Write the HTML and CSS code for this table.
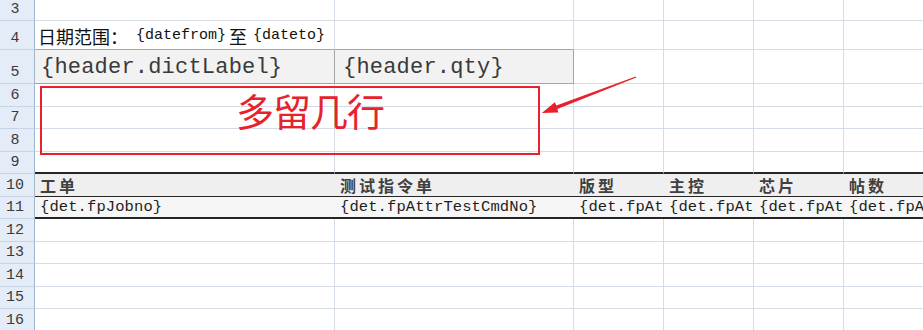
FILE: index.html
```html
<!DOCTYPE html>
<html lang="zh-CN">
<head>
<meta charset="utf-8">
<title>Sheet</title>
<link rel="stylesheet" href="styles.css">
</head>
<body>
<div class="sheet">
  <div class="row h21"><div class="rh">3</div><div class="c ca"></div><div class="c cb"></div><div class="c cc"></div><div class="c cd"></div><div class="c ce"></div><div class="c cf"></div></div>
  <div class="row h29"><div class="rh">4</div><div class="c ca gb date"><span class="zh">日期范围：</span><span class="en en1">{datefrom}</span><span class="zh zh2">至</span><span class="en">{dateto}</span></div><div class="c cb gb"></div><div class="c cc"></div><div class="c cd"></div><div class="c ce"></div><div class="c cf"></div></div>
  <div class="row h34"><div class="rh">5</div><div class="c ca fill big">{header.dictLabel}</div><div class="c cb fill big qty">{header.qty}</div><div class="c cc"></div><div class="c cd"></div><div class="c ce"></div><div class="c cf"></div></div>
  <div class="row h23"><div class="rh">6</div><div class="c ca"></div><div class="c cb"></div><div class="c cc"></div><div class="c cd"></div><div class="c ce"></div><div class="c cf"></div></div>
  <div class="row h22"><div class="rh">7</div><div class="c ca"></div><div class="c cb"></div><div class="c cc"></div><div class="c cd"></div><div class="c ce"></div><div class="c cf"></div></div>
  <div class="row h23"><div class="rh">8</div><div class="c ca"></div><div class="c cb"></div><div class="c cc"></div><div class="c cd"></div><div class="c ce"></div><div class="c cf"></div></div>
  <div class="row h22"><div class="rh">9</div><div class="c ca thick"></div><div class="c cb thick"></div><div class="c cc thick"></div><div class="c cd thick"></div><div class="c ce thick"></div><div class="c cf thick"></div></div>
  <div class="row h23 head"><div class="rh">10</div><div class="c ca th">工单</div><div class="c cb th">测试指令单</div><div class="c cc th">版型</div><div class="c cd th">主控</div><div class="c ce th">芯片</div><div class="c cf th">帖数</div></div>
  <div class="row h22 det"><div class="rh">11</div><div class="c ca td">{det.fpJobno}</div><div class="c cb td">{det.fpAttrTestCmdNo}</div><div class="c cc td">{det.fpAttrBoardType}</div><div class="c cd td">{det.fpAttrMainCtrl}</div><div class="c ce td">{det.fpAttrChip}</div><div class="c cf td">{det.fpAttrPostCount}</div></div>
  <div class="row h23"><div class="rh">12</div><div class="c ca"></div><div class="c cb"></div><div class="c cc"></div><div class="c cd"></div><div class="c ce"></div><div class="c cf"></div></div>
  <div class="row h22"><div class="rh">13</div><div class="c ca"></div><div class="c cb"></div><div class="c cc"></div><div class="c cd"></div><div class="c ce"></div><div class="c cf"></div></div>
  <div class="row h23"><div class="rh">14</div><div class="c ca"></div><div class="c cb"></div><div class="c cc"></div><div class="c cd"></div><div class="c ce"></div><div class="c cf"></div></div>
  <div class="row h22"><div class="rh">15</div><div class="c ca"></div><div class="c cb"></div><div class="c cc"></div><div class="c cd"></div><div class="c ce"></div><div class="c cf"></div></div>
  <div class="row h23"><div class="rh">16</div><div class="c ca"></div><div class="c cb"></div><div class="c cc"></div><div class="c cd"></div><div class="c ce"></div><div class="c cf"></div></div>

  <div class="note-box"></div>
  <div class="note-text">多留几行</div>
  <svg class="arrow" width="923" height="330" viewBox="0 0 923 330" xmlns="http://www.w3.org/2000/svg">
    <polygon points="636.3,77.6 635.7,76.4 556.4,105.6 554.8,102.2 541.8,112.9 558.4,112.6 557.4,108.9" fill="#e8222c"/>
  </svg>
</div>
</body>
</html>
```

FILE: styles.css
```css
html, body {
  margin: 0;
  padding: 0;
  background: #ffffff;
}

.sheet {
  position: relative;
  width: 923px;
  height: 330px;
  overflow: hidden;
  background: #ffffff;
}

.row {
  display: flex;
  width: 923px;
}

.h21 { height: 21px; }
.h22 { height: 22px; }
.h23 { height: 23px; }
.h29 { height: 29px; }
.h34 { height: 34px; }

.rh {
  flex: none;
  width: 35px;
  box-sizing: border-box;
  background: #e4ecf7;
  border-right: 1px solid #9eb6ce;
  border-bottom: 1px solid #c5d4e6;
  display: flex;
  align-items: flex-end;
  justify-content: center;
  padding-right: 4px;
  padding-bottom: 2px;
  font-family: "Liberation Mono", monospace;
  font-size: 15px;
  line-height: 16px;
  color: #3a3a3a;
}

.c {
  flex: none;
  box-sizing: border-box;
  border-right: 1px solid #d6dce6;
  border-bottom: 1px solid #d6dce6;
  overflow: hidden;
  white-space: nowrap;
  display: flex;
  align-items: flex-end;
}

.ca { width: 300px; }
.cb { width: 239px; }
.cc, .cd, .ce { width: 90px; }
.cf { width: 120px; }

.gb { border-bottom-color: #a6a6a6; }

.fill {
  background: #f2f2f2;
  border-right-color: #a6a6a6;
  border-bottom-color: #a6a6a6;
}

.date {
  padding-left: 3px;
  padding-bottom: 2px;
  line-height: 22px;
  color: #111111;
}

.zh {
  font-family: "Noto Sans CJK SC", sans-serif;
  font-size: 18px;
}

.zh2 { margin: 0 6px 0 3px; }

.en {
  font-family: "Liberation Mono", monospace;
  font-size: 15px;
  letter-spacing: 0px;
}

.en1 { margin-left: 8px; }

.big {
  font-family: "Liberation Mono", monospace;
  font-size: 22px;
  letter-spacing: 0.2px;
  line-height: 26px;
  color: #3a3a3a;
  padding-left: 6px;
  padding-bottom: 2px;
}

.qty { padding-left: 8px; }

.thick { border-bottom: 2px solid #262626; }

.head .c {
  background: #efefef;
  border-right: none;
  border-bottom: 1px solid #262626;
}

.det .c {
  background: #f6f6f6;
  border-right: none;
  border-bottom: 2px solid #262626;
}

.th {
  font-family: "Noto Sans CJK SC", sans-serif;
  font-weight: 700;
  font-size: 16px;
  letter-spacing: 3px;
  line-height: 20px;
  color: #404040;
  padding-left: 5px;
  padding-bottom: 1px;
}

.td {
  font-family: "Liberation Mono", monospace;
  font-size: 15.5px;
  letter-spacing: 0.1px;
  line-height: 19px;
  color: #1e1e1e;
  padding-left: 5px;
}

.note-box {
  position: absolute;
  left: 40px;
  top: 86px;
  width: 500px;
  height: 69px;
  box-sizing: border-box;
  border: 2px solid #e8222c;
}

.note-text {
  position: absolute;
  left: 236px;
  top: 88px;
  font-family: "Noto Sans CJK SC", sans-serif;
  font-size: 38px;
  line-height: 44px;
  letter-spacing: -1px;
  color: #e8222c;
}

.arrow {
  position: absolute;
  left: 0;
  top: 0;
  pointer-events: none;
}
```
